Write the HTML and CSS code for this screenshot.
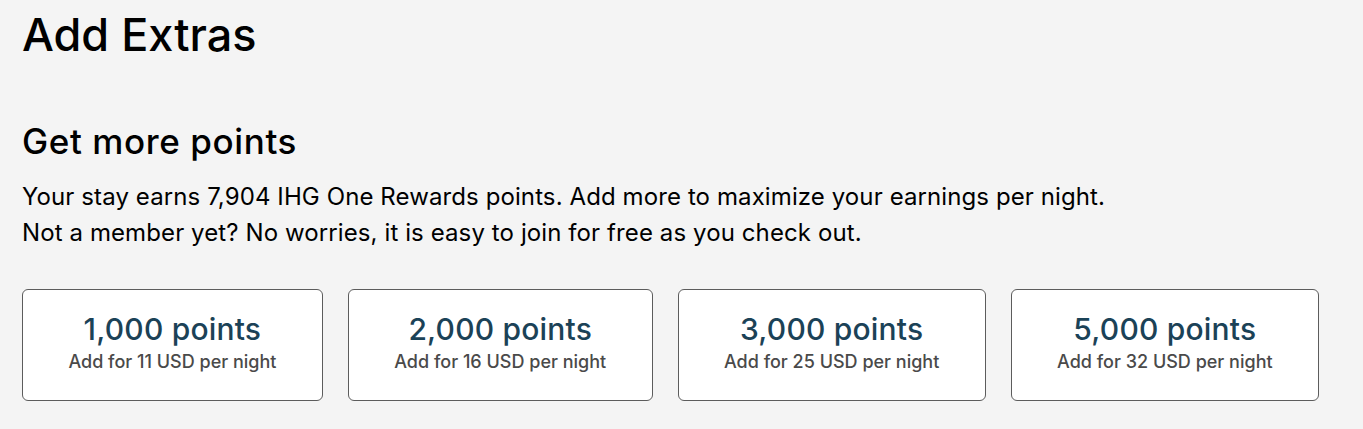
FILE: index.html
```html
<!DOCTYPE html>
<html lang="en">
<head>
<meta charset="utf-8">
<title>Add Extras</title>
<link rel="stylesheet" href="styles.css">
</head>
<body>
<main class="page">
  <h1 class="title">Add Extras</h1>
  <section class="points">
    <h2 class="points-heading">Get more points</h2>
    <p class="points-text">Your stay earns 7,904 IHG One Rewards points. Add more to maximize your earnings per night.<br>Not a member yet? No worries, it is easy to join for free as you check out.</p>
    <div class="options">
      <button class="option" type="button"><span class="option-amount">1,000 points</span><span class="option-price">Add for 11 USD per night</span></button>
      <button class="option" type="button"><span class="option-amount">2,000 points</span><span class="option-price">Add for 16 USD per night</span></button>
      <button class="option" type="button"><span class="option-amount">3,000 points</span><span class="option-price">Add for 25 USD per night</span></button>
      <button class="option" type="button"><span class="option-amount">5,000 points</span><span class="option-price">Add for 32 USD per night</span></button>
    </div>
  </section>
</main>
</body>
</html>
```
FILE: styles.css
```css
html, body {
  margin: 0;
  padding: 0;
  background: #f4f4f4;
}
body {
  font-family: Inter, "Noto Sans", "Liberation Sans", sans-serif;
  color: #000;
}
.page {
  padding: 9px 44px 0 22px;
}
.title {
  margin: 0;
  font-size: 45px;
  line-height: 52px;
  font-weight: 500;
  letter-spacing: 0;
}
.points {
  margin-top: 59px;
}
.points-heading {
  margin: 0;
  font-size: 35px;
  line-height: 42px;
  font-weight: 500;
  letter-spacing: 0.6px;
}
.points-text {
  margin: 17px 0 0;
  font-size: 24px;
  line-height: 36px;
  font-weight: 400;
  letter-spacing: 0.1px;
}
.options {
  display: flex;
  gap: 25px;
  margin-top: 38px;
}
.option {
  flex: 1 1 auto;
  display: flex;
  flex-direction: column;
  align-items: center;
  height: 112px;
  padding: 21px 10px 0;
  box-sizing: border-box;
  background: #fff;
  border: 1px solid #5c5c5c;
  border-radius: 6px;
  font-family: inherit;
  cursor: pointer;
}
.option-amount {
  font-size: 30px;
  line-height: 36px;
  font-weight: 500;
  color: #1b4257;
  letter-spacing: 0.2px;
}
.option-price {
  margin-top: 3px;
  font-size: 18px;
  line-height: 24px;
  font-weight: 500;
  color: #4a4a4a;
}
```
